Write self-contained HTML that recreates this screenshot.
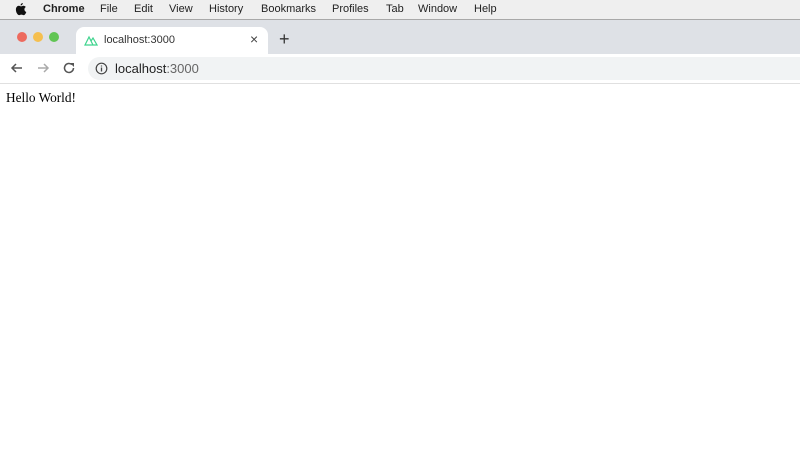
<!DOCTYPE html>
<html><head><style>
body{margin:0;width:800px;height:451px;overflow:hidden;background:#fff;font-family:"Liberation Sans",sans-serif;position:relative}
.a{position:absolute}
.menu{top:0;left:0;width:800px;height:19px;background:#efefef;border-bottom:1px solid #a8a8a8;font-size:11px;color:#222}
.menu span{position:absolute;top:3px}
.strip{top:20px;left:0;width:800px;height:34px;background:#dee1e6}
.dot{width:10px;height:10px;border-radius:50%;top:32px}
.tab{top:27px;left:76px;width:192px;height:27px;background:#fff;border-radius:8px 8px 0 0}
.tool{top:54px;left:0;width:800px;height:29px;background:#fff;border-bottom:1px solid #e0e0e0}
.omni{top:57px;left:88px;width:712px;height:23px;background:#f1f3f4;border-radius:12px 0 0 12px}
</style></head><body>
<div class="a menu">
<svg class="a" style="left:15px;top:3px" width="12" height="13" viewBox="0 0 12 14"><path d="M8 0c0 1.2-1 2.6-2.4 2.6C5.5 1.3 6.6.1 8 0zM6 3.6c.7 0 1.6-.7 2.6-.7 1 0 2 .5 2.6 1.4-2.3 1.3-1.9 4.5.5 5.4-.5 1.4-1.5 3.4-2.8 3.4-1 0-1.200-.6-2.500-.6s-1.6.6-2.5.6C2.4 13.1.5 10.2.5 7.2.5 4.7 2 3 3.7 3c.9 0 1.6.6 2.3.6z" fill="#111"/></svg>
<span style="left:43px;font-weight:bold">Chrome</span>
<span style="left:100px">File</span><span style="left:134px">Edit</span><span style="left:169px">View</span>
<span style="left:209px">History</span><span style="left:261px">Bookmarks</span><span style="left:332px">Profiles</span>
<span style="left:386px">Tab</span><span style="left:418px">Window</span><span style="left:474px">Help</span>
</div>
<div class="a strip"></div>
<div class="a dot" style="left:17px;background:#ed6a5e"></div>
<div class="a dot" style="left:33px;background:#f5bf4f"></div>
<div class="a dot" style="left:49px;background:#61c554"></div>
<div class="a tab"></div>
<svg class="a" style="left:84px;top:35px" width="14" height="11" viewBox="0 0 14 11"><path d="M1 10L5 2l4 8zM7 6l2-3 4 7H9" fill="none" stroke="#3fd48e" stroke-width="1.2"/></svg>
<div class="a" style="left:104px;top:34px;font-size:11px;color:#333">localhost:3000</div>
<div class="a" style="left:250px;top:31px;font-size:14px;color:#444">×</div>
<div class="a" style="left:279px;top:29px;font-size:18px;color:#333">+</div>
<div class="a tool"></div>
<div class="a omni"></div>
<svg class="a" style="left:10px;top:61px" width="14" height="14" viewBox="0 0 14 14"><path d="M12 7H2M6 3L2 7l4 4" fill="none" stroke="#555" stroke-width="1.5"/></svg>
<svg class="a" style="left:36px;top:61px" width="14" height="14" viewBox="0 0 14 14"><path d="M2 7h10M8 3l4 4-4 4" fill="none" stroke="#aaa" stroke-width="1.5"/></svg>
<svg class="a" style="left:62px;top:61px" width="14" height="14" viewBox="0 0 14 14"><path d="M11.5 7A4.5 4.5 0 1 1 10 3.6" fill="none" stroke="#555" stroke-width="1.5"/><path d="M8 2h4v4z" fill="#555"/></svg>
<svg class="a" style="left:95px;top:62px" width="13" height="13" viewBox="0 0 13 13"><circle cx="6.5" cy="6.5" r="5.3" fill="none" stroke="#444" stroke-width="1.2"/><path d="M6.5 5.5v4M6.5 3.5v1" stroke="#444" stroke-width="1.3"/></svg>
<div class="a" style="left:115px;top:61px;font-size:13px;color:#222">localhost<span style="color:#666">:3000</span></div>
<div class="a" style="left:6px;top:90px;font-family:'Liberation Serif',serif;font-size:13.3px;color:#000">Hello World!</div>
</body></html>
